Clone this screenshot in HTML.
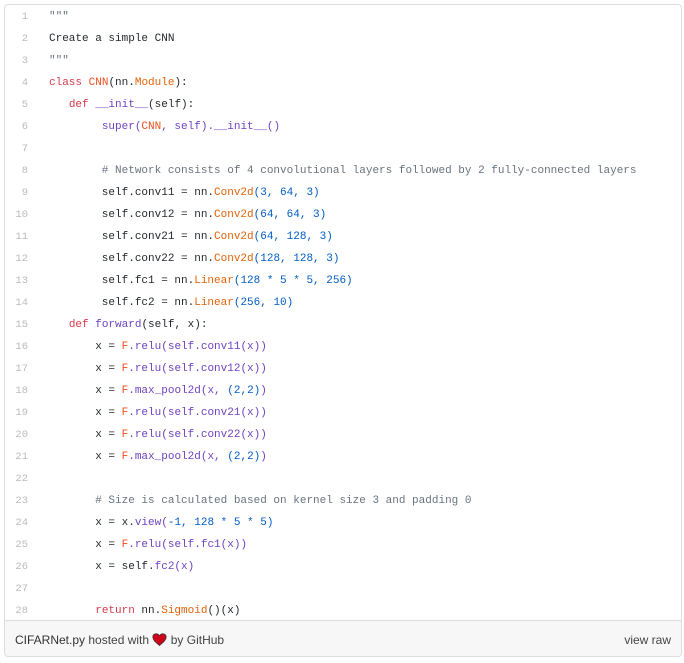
<!DOCTYPE html>
<html><head><style>
body{margin:0;background:#fff;}
.card{position:absolute;left:4px;top:4px;width:678px;height:653px;border:1px solid #ddd;border-radius:4px;overflow:hidden;box-sizing:border-box;}
.code{position:absolute;left:0;right:0;}
.l{height:22px;line-height:22px;white-space:pre;font:11px "Liberation Mono",monospace;color:#24292e;position:relative;}
.n{position:absolute;left:0;width:23px;text-align:right;color:#bbb;font-size:10.5px}
.t{position:absolute;left:44px}
.k{color:#d73a49}.o{color:#e36209}.p{color:#6f42c1}.b{color:#005cc5}.c{color:#6a737d}.r{color:#f0501e}
.foot{position:absolute;left:0;right:0;top:615px;bottom:0;background:#f7f7f7;border-top:1px solid #ddd;font:12px "Liberation Sans",Arial,sans-serif;color:#444;}
.foot span{position:absolute;top:12px}
</style></head><body>
<div class="card"><div class="code" style="top:6px">
<div class="l"><span class="n">1</span><span class="t c">"""</span></div>
<div class="l"><span class="n">2</span><span class="t">Create a simple CNN</span></div>
<div class="l"><span class="n">3</span><span class="t c">"""</span></div>
<div class="l"><span class="n">4</span><span class="t"><span class="k">class</span> <span class="r">CNN</span>(nn.<span class="o">Module</span>):</span></div>
<div class="l"><span class="n">5</span><span class="t">   <span class="k">def</span> <span class="p">__init__</span>(self):</span></div>
<div class="l"><span class="n">6</span><span class="t">        <span class="p">super(</span><span class="r">CNN</span><span class="p">, self).__init__()</span></span></div>
<div class="l"><span class="n">7</span><span class="t"></span></div>
<div class="l"><span class="n">8</span><span class="t c">        # Network consists of 4 convolutional layers followed by 2 fully-connected layers</span></div>
<div class="l"><span class="n">9</span><span class="t">        self.conv11 = nn.<span class="o">Conv2d</span><span class="b">(3, 64, 3)</span></span></div>
<div class="l"><span class="n">10</span><span class="t">        self.conv12 = nn.<span class="o">Conv2d</span><span class="b">(64, 64, 3)</span></span></div>
<div class="l"><span class="n">11</span><span class="t">        self.conv21 = nn.<span class="o">Conv2d</span><span class="b">(64, 128, 3)</span></span></div>
<div class="l"><span class="n">12</span><span class="t">        self.conv22 = nn.<span class="o">Conv2d</span><span class="b">(128, 128, 3)</span></span></div>
<div class="l"><span class="n">13</span><span class="t">        self.fc1 = nn.<span class="o">Linear</span><span class="b">(128 * 5 * 5, 256)</span></span></div>
<div class="l"><span class="n">14</span><span class="t">        self.fc2 = nn.<span class="o">Linear</span><span class="b">(256, 10)</span></span></div>
<div class="l"><span class="n">15</span><span class="t">   <span class="k">def</span> <span class="p">forward</span>(self, x):</span></div>
<div class="l"><span class="n">16</span><span class="t">       x = <span class="r">F</span><span class="p">.relu(self.conv11(x))</span></span></div>
<div class="l"><span class="n">17</span><span class="t">       x = <span class="r">F</span><span class="p">.relu(self.conv12(x))</span></span></div>
<div class="l"><span class="n">18</span><span class="t">       x = <span class="r">F</span><span class="p">.max_pool2d(x, </span><span class="b">(2,2)</span><span class="p">)</span></span></div>
<div class="l"><span class="n">19</span><span class="t">       x = <span class="r">F</span><span class="p">.relu(self.conv21(x))</span></span></div>
<div class="l"><span class="n">20</span><span class="t">       x = <span class="r">F</span><span class="p">.relu(self.conv22(x))</span></span></div>
<div class="l"><span class="n">21</span><span class="t">       x = <span class="r">F</span><span class="p">.max_pool2d(x, </span><span class="b">(2,2)</span><span class="p">)</span></span></div>
<div class="l"><span class="n">22</span><span class="t"></span></div>
<div class="l"><span class="n">23</span><span class="t c">       # Size is calculated based on kernel size 3 and padding 0</span></div>
<div class="l"><span class="n">24</span><span class="t">       x = x.<span class="p">view(</span><span class="b">-1, 128 * 5 * 5)</span></span></div>
<div class="l"><span class="n">25</span><span class="t">       x = <span class="r">F</span><span class="p">.relu(self.fc1(x))</span></span></div>
<div class="l"><span class="n">26</span><span class="t">       x = self.<span class="p">fc2(x)</span></span></div>
<div class="l"><span class="n">27</span><span class="t"></span></div>
<div class="l"><span class="n">28</span><span class="t">       <span class="k">return</span> nn.<span class="o">Sigmoid</span>()(x)</span></div>
</div>
<div class="foot"><span style="left:10px"><b style="font-weight:normal;color:#333">CIFARNet.py</b> hosted with <svg width="15" height="13" viewBox="0 0 16 14" style="vertical-align:-2px"><path d="M8 13.5C4 10 0.8 7.5 0.8 4.3 0.8 2.2 2.4 0.8 4.3 0.8 5.8 0.8 7.2 1.7 8 3 8.8 1.7 10.2 0.8 11.7 0.8 13.6 0.8 15.2 2.2 15.2 4.3 15.2 7.5 12 10 8 13.5Z" fill="#d0021b" stroke="#333" stroke-width="0.8"/></svg> by GitHub</span><span style="right:10px">view raw</span></div>
</div>
</body></html>
